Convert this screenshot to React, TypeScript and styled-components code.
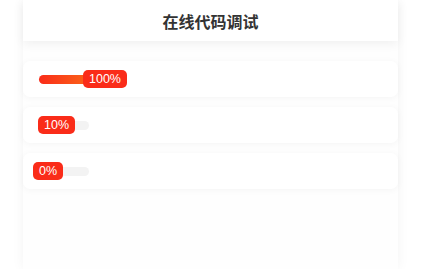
import React from "react";
import styled, { createGlobalStyle } from "styled-components";

const Global = createGlobalStyle`
  html, body { margin: 0; padding: 0; background: #ffffff; }
  body { font-family: "Liberation Sans", Arial, "Noto Sans CJK SC", sans-serif; }
`;

const Page = styled.div`
  width: 375px;
  min-height: 269px;
  margin-left: 23px;
  background: #fefefe;
  box-shadow: 0 0 12px rgba(0, 0, 0, 0.05);
  display: flex;
  flex-direction: column;
`;

const Header = styled.header`
  height: 41px;
  background: #ffffff;
  display: flex;
  align-items: center;
  justify-content: center;
  box-shadow: 0 3px 10px rgba(0, 0, 0, 0.06);
  position: relative;
  z-index: 1;
`;

const Title = styled.h1`
  margin: 0;
  font-family: "Noto Sans CJK SC", sans-serif;
  font-size: 16px;
  font-weight: 700;
  color: #333333;
  line-height: 1;
`;

const List = styled.div`
  display: flex;
  flex-direction: column;
  gap: 10px;
  padding-top: 20px;
`;

const Card = styled.div`
  height: 36px;
  background: #ffffff;
  border-radius: 7px;
  box-shadow: 0 1px 7px rgba(0, 0, 0, 0.045);
  display: flex;
  align-items: center;
  padding-left: 16px;
`;

const Track = styled.div`
  position: relative;
  width: 50px;
  height: 9px;
  border-radius: 5px;
  background: #f3f3f3;
`;

const Bar = styled.div`
  height: 100%;
  border-radius: 5px;
  background: linear-gradient(90deg, #fa2c19 0%, #fa6419 100%);
`;

const Pivot = styled.span`
  position: absolute;
  top: 50%;
  transform: translateY(-50%);
  height: 18px;
  padding: 0 6px;
  border-radius: 5px;
  background: #fa2c19;
  color: #ffffff;
  font-size: 12.5px;
  line-height: 18px;
  white-space: nowrap;
`;

const items = [100, 10, 0];

export default function App() {
  return (
    <>
      <Global />
      <Page>
        <Header>
          <Title>在线代码调试</Title>
        </Header>
        <List>
          {items.map((p) => (
            <Card key={p}>
              <Track>
                <Bar style={{ width: `${p}%` }} />
                <Pivot style={{ left: `${(p / 100) * 50 - 6}px` }}>{p}%</Pivot>
              </Track>
            </Card>
          ))}
        </List>
      </Page>
    </>
  );
}
